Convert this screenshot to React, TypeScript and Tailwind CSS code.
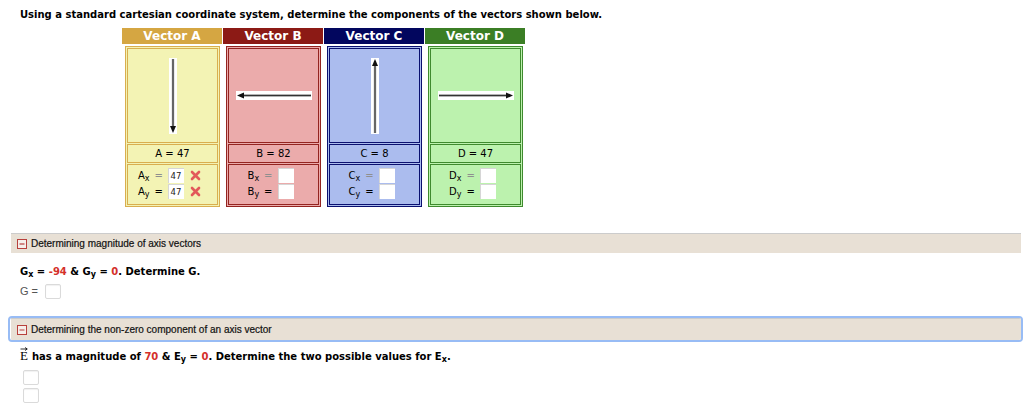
import React from 'react';

type Dir = 'up' | 'down' | 'left' | 'right';

interface Vec {
  name: string;
  mag: number;
  headCls: string;
  panelCls: string;
  cellCls: string;
  dir: Dir;
  vals?: [string, string];
}

const vectors: Vec[] = [
  {
    name: 'A',
    mag: 47,
    headCls: 'bg-[#d5a642]',
    panelCls: 'bg-[#f3f3b4] border-[#d9ae4f]',
    cellCls: 'border-[#d9ae4f]',
    dir: 'down',
    vals: ['47', '47'],
  },
  {
    name: 'B',
    mag: 82,
    headCls: 'bg-[#8c1a15]',
    panelCls: 'bg-[#ebabab] border-[#942420]',
    cellCls: 'border-[#942420]',
    dir: 'left',
  },
  {
    name: 'C',
    mag: 8,
    headCls: 'bg-[#02065e]',
    panelCls: 'bg-[#abbcee] border-[#0a1070]',
    cellCls: 'border-[#0a1070]',
    dir: 'up',
  },
  {
    name: 'D',
    mag: 47,
    headCls: 'bg-[#3b7e25]',
    panelCls: 'bg-[#bcf2ae] border-[#3f8a2e]',
    cellCls: 'border-[#3f8a2e]',
    dir: 'right',
  },
];

function Arrow({ dir }: { dir: Dir }) {
  if (dir === 'up' || dir === 'down') {
    return (
      <svg width="8" height="76" viewBox="0 0 8 76">
        <rect x="0" y="0" width="8" height="76" fill="#ffffff" />
        {dir === 'down' ? (
          <>
            <line x1="4" y1="1" x2="4" y2="69" stroke="#9a9a9a" strokeWidth="2.4" />
            <line x1="4" y1="1" x2="4" y2="69" stroke="#333" strokeWidth="1" />
            <polygon points="1,68 7,68 4,75" fill="#111" />
          </>
        ) : (
          <>
            <line x1="4" y1="7" x2="4" y2="75" stroke="#9a9a9a" strokeWidth="2.4" />
            <line x1="4" y1="7" x2="4" y2="75" stroke="#333" strokeWidth="1" />
            <polygon points="1,8 7,8 4,1" fill="#111" />
          </>
        )}
      </svg>
    );
  }
  return (
    <svg width="76" height="9" viewBox="0 0 76 9">
      <rect x="0" y="0" width="76" height="9" fill="#ffffff" />
      {dir === 'left' ? (
        <>
          <line x1="7" y1="4.5" x2="75" y2="4.5" stroke="#9a9a9a" strokeWidth="2.4" />
          <line x1="7" y1="4.5" x2="75" y2="4.5" stroke="#333" strokeWidth="1" />
          <polygon points="8,1.5 8,7.5 1,4.5" fill="#111" />
        </>
      ) : (
        <>
          <line x1="1" y1="4.5" x2="69" y2="4.5" stroke="#9a9a9a" strokeWidth="2.4" />
          <line x1="1" y1="4.5" x2="69" y2="4.5" stroke="#333" strokeWidth="1" />
          <polygon points="68,1.5 68,7.5 75,4.5" fill="#111" />
        </>
      )}
    </svg>
  );
}

function RedX() {
  return (
    <svg width="11" height="11" viewBox="0 0 11 11" className="ml-[6px]">
      <line x1="2" y1="2" x2="9" y2="9" stroke="#e2595a" strokeWidth="2.6" strokeLinecap="round" />
      <line x1="9" y1="2" x2="2" y2="9" stroke="#e2595a" strokeWidth="2.6" strokeLinecap="round" />
    </svg>
  );
}

function CompRow({
  name,
  axis,
  value,
  dimEq,
  wrong,
}: {
  name: string;
  axis: string;
  value?: string;
  dimEq: boolean;
  wrong: boolean;
}) {
  return (
    <div className="h-[15px] flex items-center justify-center pr-[6px] text-[10px] leading-[12px]">
      <span>
        {name}
        <sub className="text-[8px]">{axis}</sub>
      </span>
      <span className={dimEq ? 'mx-[5px] text-[#8f8f8f]' : 'mx-[5px] text-black'}>=</span>
      <span className="w-[16px] h-[15px] bg-white shadow-[inset_1px_1px_0_#d6d6d6] flex items-center justify-center text-[8.5px] text-[#222]">
        {value ?? ''}
      </span>
      {wrong ? <RedX /> : null}
    </div>
  );
}

function Column({ v }: { v: Vec }) {
  return (
    <div className="w-[100px] flex flex-col">
      <div
        className={`h-[16px] ${v.headCls} text-white font-bold text-[12px] leading-[16px] text-center`}
      >
        Vector {v.name}
      </div>
      <div className={`mt-[2px] ml-[3px] w-[95px] border ${v.panelCls} p-[1px] flex flex-col gap-[1px]`}>
        <div className={`h-[95px] border ${v.cellCls} flex items-center justify-center`}>
          <Arrow dir={v.dir} />
        </div>
        <div className={`h-[19px] border ${v.cellCls} flex items-center justify-center text-[10px] leading-[12px]`}>
          {v.name} = {v.mag}
        </div>
        <div className={`h-[41px] border ${v.cellCls} flex flex-col pt-[3px] gap-[1px]`}>
          <CompRow name={v.name} axis="x" value={v.vals?.[0]} dimEq={true} wrong={!!v.vals} />
          <CompRow name={v.name} axis="y" value={v.vals?.[1]} dimEq={false} wrong={!!v.vals} />
        </div>
      </div>
    </div>
  );
}

function MinusIcon() {
  return (
    <svg width="10" height="10" viewBox="0 0 10 10" className="shrink-0">
      <rect x="0.5" y="0.5" width="9" height="9" fill="#f6eeea" stroke="#b8403c" strokeWidth="1" />
      <line x1="2.5" y1="5" x2="7.5" y2="5" stroke="#b8403c" strokeWidth="1.2" />
    </svg>
  );
}

function SmallInput({ className = '' }: { className?: string }) {
  return (
    <div
      className={`w-[16px] h-[15px] bg-white border border-[#dadada] rounded-[2px] shadow-[inset_0_1px_1px_rgba(0,0,0,0.06)] ${className}`}
    />
  );
}

export default function App() {
  return (
    <div className="w-[1024px] h-[411px] bg-white overflow-hidden text-black font-['DejaVu_Sans',Verdana,sans-serif]">
      <div className="h-[28px] pl-[20px] pt-[8px] text-[10px] font-bold leading-[13px]">
        Using a standard cartesian coordinate system, determine the components of the vectors shown below.
      </div>

      <div className="ml-[122px] flex gap-[1px]">
        {vectors.map((v) => (
          <Column key={v.name} v={v} />
        ))}
      </div>

      {/* Section 1 */}
      <div className="mt-[26px] ml-[11px] w-[1010px] h-[20px] bg-[#e8e0d5] border-t border-[#cccccc] flex items-center pl-[6px] gap-[4px] font-['Liberation_Sans',Arial,sans-serif] text-[10px] text-[#111] [-webkit-text-stroke:0.2px_#111]">
        <MinusIcon />
        <span>Determining magnitude of axis vectors</span>
      </div>

      <div className="mt-[12px] pl-[20px] text-[10px] font-bold leading-[14px]">
        G<sub className="text-[8px]">x</sub> = <span className="text-[#d4302a]">-94</span> &amp; G
        <sub className="text-[8px]">y</sub> = <span className="text-[#d4302a]">0</span>. Determine G.
      </div>

      <div className="mt-[5px] pl-[20px] flex items-center h-[15px] font-['Liberation_Sans',Arial,sans-serif] text-[11px] text-[#555]">
        <span className="w-[25px]">G =</span>
        <SmallInput />
      </div>

      {/* Section 2 */}
      <div className="mt-[17px] ml-[8px] w-[1015px] border-2 border-[#98bcf5] rounded-[4px] overflow-hidden">
        <div className="ml-[1px] h-[22px] bg-[#e8e0d5] border-t border-[#cccccc] flex items-center pl-[6px] gap-[4px] font-['Liberation_Sans',Arial,sans-serif] text-[10px] text-[#111] [-webkit-text-stroke:0.2px_#111]">
          <MinusIcon />
          <span>Determining the non-zero component of an axis vector</span>
        </div>
      </div>

      <div className="mt-[7px] pl-[20px] text-[10px] font-bold leading-[14px] flex items-baseline">
        <span className="relative inline-block font-['Liberation_Serif','Times_New_Roman',serif] font-normal text-[13px] leading-[14px] mr-[4px]">
          E
          <svg width="8" height="4" viewBox="0 0 8 4" className="absolute left-[0px] top-[-2px]">
            <line x1="0.5" y1="2" x2="7" y2="2" stroke="#000" strokeWidth="0.8" />
            <polyline points="5,0.5 7.3,2 5,3.5" fill="none" stroke="#000" strokeWidth="0.8" />
          </svg>
        </span>
        <span>
          has a magnitude of <span className="text-[#d4302a]">70</span> &amp; E<sub className="text-[8px]">y</sub> ={' '}
          <span className="text-[#d4302a]">0</span>. Determine the two possible values for E
          <sub className="text-[8px]">x</sub>.
        </span>
      </div>

      <div className="mt-[6px] pl-[23px] flex flex-col gap-[3px]">
        <SmallInput />
        <SmallInput />
      </div>
    </div>
  );
}
